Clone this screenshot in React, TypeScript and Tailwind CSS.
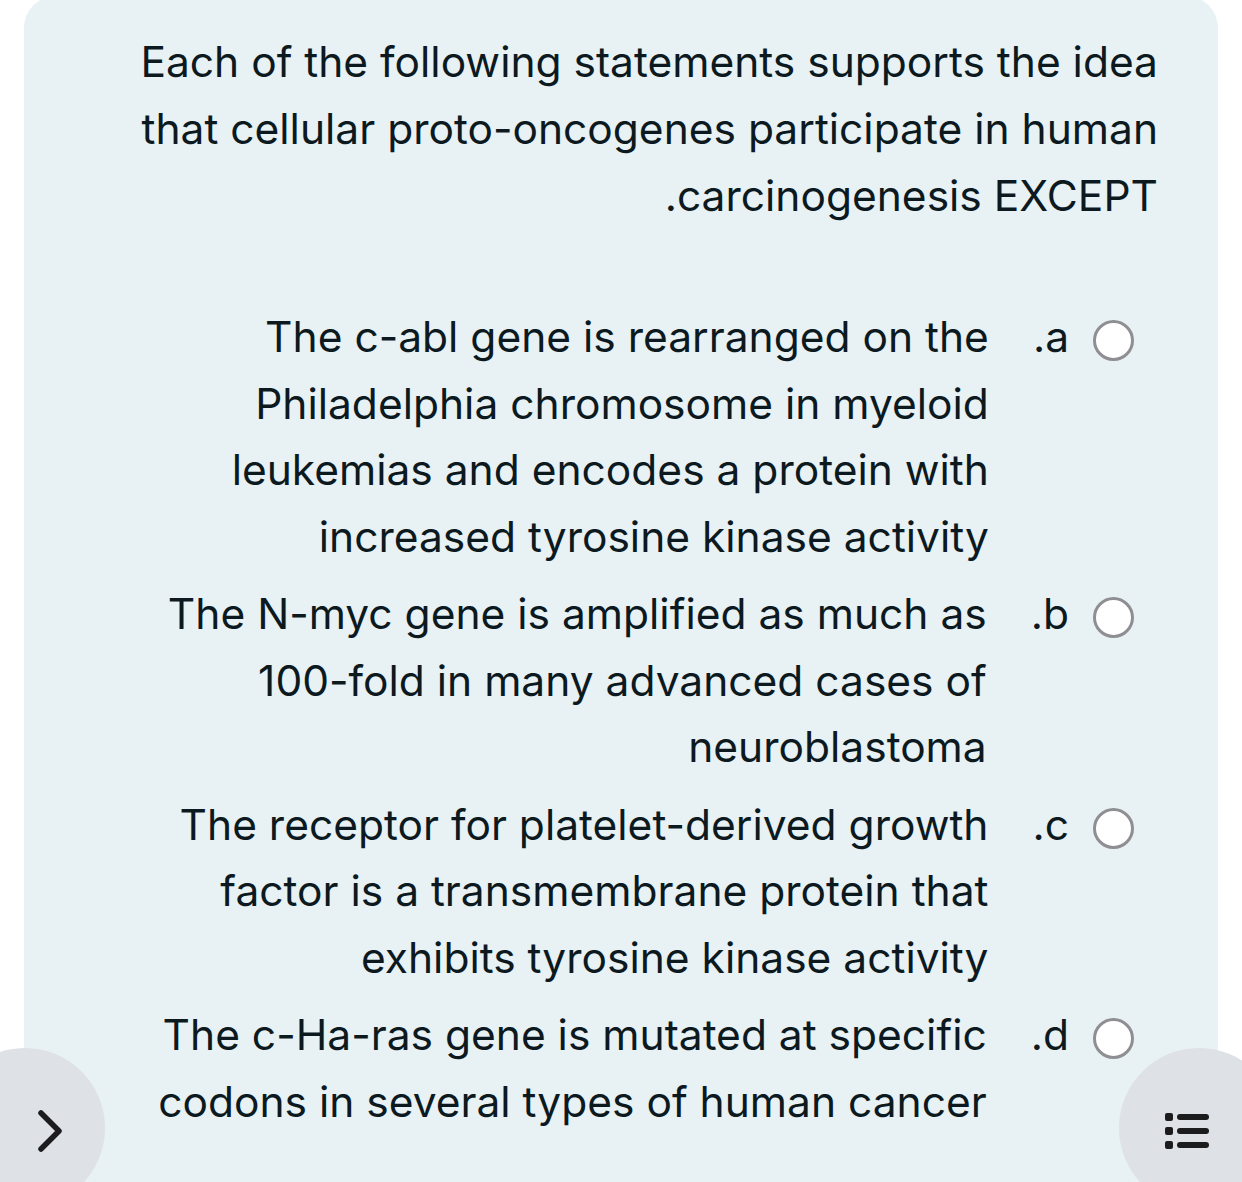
const OPTIONS = [
  {
    key: ".a",
    text: "The c-abl gene is rearranged on the Philadelphia chromosome in myeloid leukemias and encodes a protein with increased tyrosine kinase activity",
  },
  {
    key: ".b",
    text: "The N-myc gene is amplified as much as 100-fold in many advanced cases of neuroblastoma",
  },
  {
    key: ".c",
    text: "The receptor for platelet-derived growth factor is a transmembrane protein that exhibits tyrosine kinase activity",
  },
  {
    key: ".d",
    text: "The c-Ha-ras gene is mutated at specific codons in several types of human cancer",
  },
];

function Option({ label, text }: { label: string; text: string }) {
  return (
    <div className="flex items-start justify-end">
      <p className="max-w-[840px] text-right text-[42.5px] leading-[66.5px]">{text}</p>
      <span className="ml-[44px] text-[42.5px] leading-[66.5px]">{label}</span>
      <div className="ml-[24px] flex h-[66.5px] items-center pt-[7px]">
        <span className="block h-[41px] w-[41px] rounded-full border-[3px] border-[#8e8e93] bg-white" />
      </div>
    </div>
  );
}

export default function App() {
  return (
    <div
      className="relative h-[1182px] w-[1242px] overflow-hidden bg-white text-[#0c1a1f]"
      style={{ fontFamily: "Inter, 'Noto Sans', sans-serif" }}
    >
      <div className="mx-[24px] -mt-[4px] min-h-[1240px] rounded-[32px] bg-[#e8f1f4] pt-[32px]">
        <p className="ml-[100px] mr-[60px] text-right text-[42.5px] leading-[67px]">
          Each of the following statements supports the idea that cellular proto-oncogenes participate in human .carcinogenesis EXCEPT
        </p>
        <div className="mr-[84px] mt-[75px] flex flex-col gap-[11px]">
          {OPTIONS.map((o) => (
            <Option key={o.key} label={o.key} text={o.text} />
          ))}
        </div>
      </div>

      <button className="absolute left-[-55px] top-[1048px] flex h-[160px] w-[160px] items-center justify-center rounded-full bg-[#dee1e5] pl-[50px] pt-[6px]">
        <svg width="28" height="44" viewBox="0 0 28 44" fill="none">
          <path d="M5 4 L23 22 L5 40" stroke="#1c1c1e" strokeWidth="5.5" strokeLinecap="round" strokeLinejoin="round" />
        </svg>
      </button>
      <button className="absolute left-[1119px] top-[1048px] flex h-[160px] w-[160px] items-center justify-center rounded-full bg-[#dee1e5] pr-[24px] pt-[6px]">
        <svg width="46" height="38" viewBox="0 0 46 38" fill="#1c1c1e">
          <rect x="1" y="1" width="8" height="8" rx="2" />
          <rect x="1" y="15" width="8" height="8" rx="2" />
          <rect x="1" y="29" width="8" height="8" rx="2" />
          <rect x="13" y="2" width="32" height="6" rx="3" />
          <rect x="13" y="16" width="32" height="6" rx="3" />
          <rect x="13" y="30" width="32" height="6" rx="3" />
        </svg>
      </button>
    </div>
  );
}
